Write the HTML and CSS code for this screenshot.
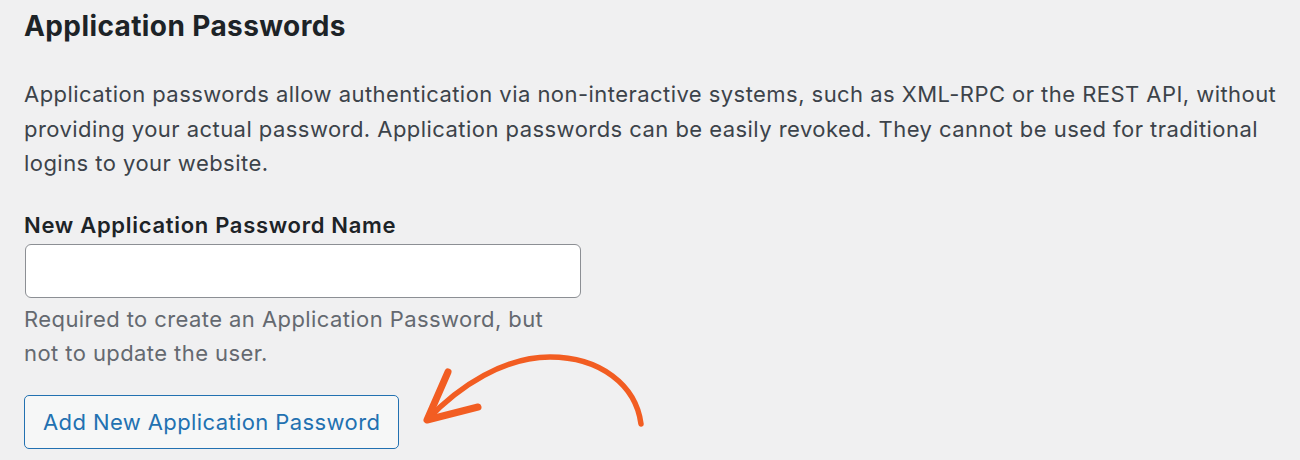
FILE: index.html
```html
<!DOCTYPE html>
<html>
<head>
  <meta charset="utf-8">
  <title>Application Passwords</title>
  <link rel="stylesheet" href="styles.css">
</head>
<body>
  <div class="section">
    <h2 class="title">Application Passwords</h2>
    <p class="intro">Application passwords allow authentication via non-interactive systems, such as XML-RPC or the REST API, without providing your actual password. Application passwords can be easily revoked. They cannot be used for traditional logins to your website.</p>

    <div class="field">
      <label class="field-label" for="new-app-pass-name">New Application Password Name</label>
      <input class="field-input" type="text" id="new-app-pass-name" name="new-app-pass-name">
      <p class="field-help">Required to create an Application Password, but not to update the user.</p>
    </div>

    <button class="btn" type="button">Add New Application Password</button>

    <!-- hand drawn pointer -->
    <svg class="pointer" width="240" height="100" viewBox="410 340 240 100" fill="none" stroke="#f25d22" stroke-linecap="round" stroke-linejoin="round">
      <path d="M641 424 C 636 385, 600 357, 550 357 C 505 357, 460 385, 427 420" stroke-width="5.5"/>
      <path d="M448 372 L427 420 L478 407" stroke-width="7"/>
    </svg>
  </div>
</body>
</html>
```

FILE: styles.css
```css
body {
  margin: 0;
  background: #f0f0f1;
  font-family: Inter, "Noto Sans", sans-serif;
  color: #3c434a;
}

.section {
  position: relative;
  padding: 8px 8px 0 24px;
  height: 452px;
}

.title {
  margin: 0;
  font-size: 28px;
  line-height: 36px;
  font-weight: 700;
  letter-spacing: 0.4px;
  color: #1d2327;
}

.intro {
  margin: 33px 0 0;
  max-width: 1262px;
  font-size: 22px;
  line-height: 34.5px;
  letter-spacing: 0.45px;
}

.field {
  margin-top: 29px;
}

.field-label {
  display: block;
  font-size: 22px;
  line-height: 30px;
  font-weight: 600;
  letter-spacing: 0.7px;
  color: #1d2327;
}

.field-input {
  display: block;
  box-sizing: border-box;
  width: 556px;
  height: 54px;
  margin: 4px 0 0 1px;
  border: 1px solid #8c8f94;
  border-radius: 6px;
  background: #fff;
}

.field-help {
  margin: 4px 0 0;
  max-width: 556px;
  font-size: 22px;
  line-height: 34.5px;
  letter-spacing: 0.42px;
  color: #646970;
}

.btn {
  display: block;
  margin-top: 24px;
  height: 54px;
  padding: 0 18px;
  border: 1px solid #2271b1;
  border-radius: 5px;
  background: #f6f7f7;
  color: #2271b1;
  font-family: Inter, "Noto Sans", sans-serif;
  font-size: 22px;
  letter-spacing: 0.4px;
}

.pointer {
  position: absolute;
  left: 410px;
  top: 340px;
}
```
